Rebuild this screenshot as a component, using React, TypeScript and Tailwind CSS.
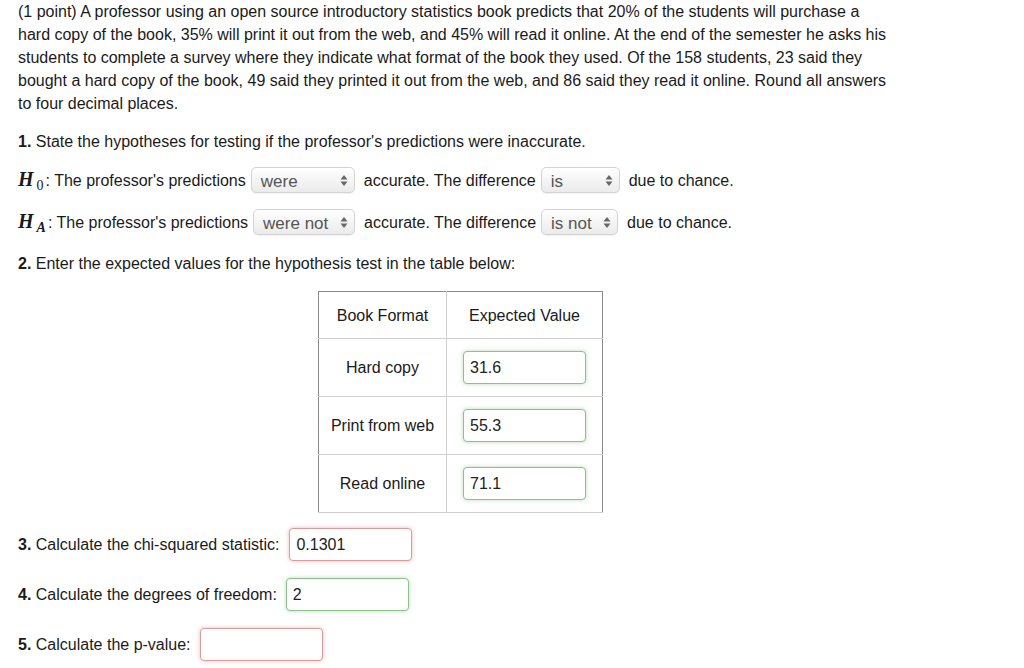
import React from "react";

const font = { fontFamily: '"Liberation Sans", Arial, Helvetica, sans-serif' };

function Select({ value, w }: { value: string; w: string }) {
  return (
    <span
      className={`inline-flex items-center justify-between h-[26px] ${w} ml-[5px] mr-[9px] pl-[9px] pr-[6px] rounded-[5px] border border-[#d3d3d3] bg-gradient-to-b from-white to-[#ebebeb] text-[17px] text-[#555] shadow-[0_1px_1px_rgba(0,0,0,0.06)]`}
    >
      <span className="leading-[26px] mt-[3px]">{value}</span>
      <svg width="8" height="13" viewBox="0 0 8 13">
        <path d="M4 1 L7.5 5.5 H0.5 Z" fill="#666" />
        <path d="M4 12 L7.5 7.5 H0.5 Z" fill="#666" />
      </svg>
    </span>
  );
}

function Field({ value, ok }: { value?: string; ok: boolean }) {
  return (
    <span
      className={`inline-flex items-center h-[33px] w-[123px] px-[6px] rounded-[4px] bg-white border text-[16px] text-[#222] ${
        ok
          ? "border-[#8cc08c] shadow-[0_0_4px_rgba(70,150,70,0.35)]"
          : "border-[#dc9a9a] shadow-[0_0_4px_rgba(190,70,70,0.35)]"
      }`}
    >
      {value}
    </span>
  );
}

function H({ sub }: { sub: string }) {
  return (
    <span
      style={{ fontFamily: '"Liberation Serif", "Times New Roman", serif' }}
      className="inline-flex items-baseline italic font-bold text-[20px] leading-[23px] mr-[2px]"
    >
      H
      <span className={`text-[14px] ml-[3px] translate-y-[4px] ${sub === "A" ? "italic" : "not-italic font-normal"}`}>{sub}</span>
    </span>
  );
}

export default function App() {
  const rows = [
    ["Hard copy", "31.6"],
    ["Print from web", "55.3"],
    ["Read online", "71.1"],
  ];

  return (
    <div style={font} className="w-[1024px] h-[668px] bg-white text-[16px] leading-[23px] text-[#1a1a1a] overflow-hidden">
      <div className="pl-[18px]">
        <p>
          (1 point) A professor using an open source introductory statistics book predicts that 20% of the students will purchase a
          <br />
          hard copy of the book, 35% will print it out from the web, and 45% will read it online. At the end of the semester he asks his
          <br />
          students to complete a survey where they indicate what format of the book they used. Of the 158 students, 23 said they
          <br />
          bought a hard copy of the book, 49 said they printed it out from the web, and 86 said they read it online. Round all answers
          <br />
          to four decimal places.
        </p>

        <p className="mt-[15px]">
          <b>1.</b> State the hypotheses for testing if the professor's predictions were inaccurate.
        </p>

        <div className="mt-[14px] flex items-center h-[26px]">
          <H sub="0" />
          <span>: The professor's predictions</span>
          <Select value="were" w="w-[104px]" />
          <span>accurate. The difference</span>
          <Select value="is" w="w-[79px]" />
          <span>due to chance.</span>
        </div>

        <div className="mt-[16px] flex items-center h-[26px]">
          <H sub="A" />
          <span>: The professor's predictions</span>
          <Select value="were not" w="w-[102px]" />
          <span>accurate. The difference</span>
          <Select value="is not" w="w-[77px]" />
          <span>due to chance.</span>
        </div>

        <p className="mt-[17px]">
          <b>2.</b> Enter the expected values for the hypothesis test in the table below:
        </p>
      </div>

      <table className="ml-[318px] mt-[16px] border-collapse border border-[#8a8a8a]">
        <tbody>
          <tr className="h-[47px]">
            <td className="w-[128px] text-center border border-[#cfcfcf] border-l-[#8a8a8a] border-t-[#8a8a8a]">Book Format</td>
            <td className="w-[156px] text-center border border-[#cfcfcf] border-r-[#8a8a8a] border-t-[#8a8a8a]">Expected Value</td>
          </tr>
          {rows.map(([k, v]) => (
            <tr key={k} className="h-[58px]">
              <td className="text-center border border-[#cfcfcf] border-l-[#8a8a8a]">{k}</td>
              <td className="border border-[#cfcfcf] border-r-[#8a8a8a]">
                <div className="flex justify-center">
                  <Field value={v} ok />
                </div>
              </td>
            </tr>
          ))}
        </tbody>
      </table>

      <div className="pl-[18px]">
        <div className="mt-[15px] flex items-center gap-[10px]">
          <span>
            <b>3.</b> Calculate the chi-squared statistic:
          </span>
          <Field value="0.1301" ok={false} />
        </div>
        <div className="mt-[17px] flex items-center gap-[9px]">
          <span>
            <b>4.</b> Calculate the degrees of freedom:
          </span>
          <Field value="2" ok />
        </div>
        <div className="mt-[17px] flex items-center gap-[9px]">
          <span>
            <b>5.</b> Calculate the p-value:
          </span>
          <Field ok={false} />
        </div>
      </div>
    </div>
  );
}
